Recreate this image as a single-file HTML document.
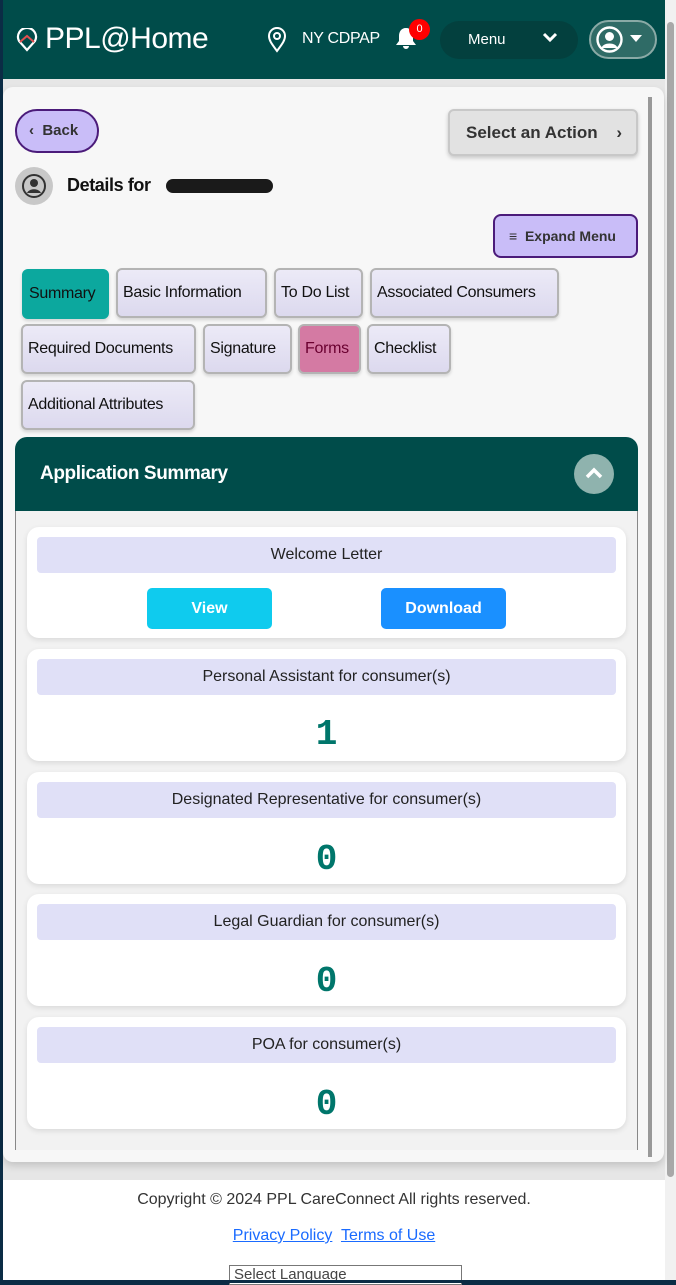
<!DOCTYPE html>
<html><head><meta charset="utf-8"><style>
*{box-sizing:border-box;margin:0;padding:0}
body{width:676px;height:1283px;overflow:hidden;background:#0b2c45;font-family:"Liberation Sans",sans-serif;position:relative}
.hdr{position:absolute;left:3px;top:0;width:662px;height:79px;background:#004c4a}
.sb{position:absolute;left:665px;top:0;width:11px;height:1283px;background:#f1f1f1}
.sb .th{position:absolute;left:2px;top:22px;width:7px;height:1155px;background:#a8a8a8;border-radius:4px}
.main{position:absolute;left:3px;top:79px;width:662px;height:1101px;background:#e6e6e6}
.card{position:absolute;left:3px;top:87px;width:661px;height:1075px;background:#f7f7f7;border-radius:10px;box-shadow:0 4px 8px rgba(0,0,0,.15)}
.foot{position:absolute;left:3px;top:1180px;width:662px;height:100px;background:#fff}
.tab{position:absolute;height:50px;border:2px solid #b4b4b4;border-radius:6px;background:linear-gradient(#eceaf7,#dcd9ee);font-size:16px;color:#111;line-height:46px;padding:0 5px;white-space:nowrap;overflow:hidden;letter-spacing:-0.3px;box-shadow:0 2px 3px rgba(0,0,0,.15)}
.box{position:absolute;left:27px;width:599px;background:#fff;border-radius:12px;box-shadow:0 2px 6px rgba(0,0,0,.1)}
.lbl{position:absolute;left:10px;right:10px;top:10px;height:36px;background:#e0e0f7;border-radius:4px;text-align:center;line-height:36px;font-size:16px;color:#222}
.num{position:absolute;left:0;right:0;text-align:center;font-family:"Liberation Mono",monospace;font-weight:bold;font-size:36px;color:#00766b}
</style></head><body>
<div class="hdr">
 <svg style="position:absolute;left:13px;top:28px" width="22" height="24" viewBox="0 0 22 24"><path d="M11 22 L3 13 A9 9 0 1 1 19 13 Z" fill="none" stroke="#fff" stroke-width="2.2"/><path d="M4 14 L11 8 L18 14" fill="none" stroke="#e05050" stroke-width="2"/></svg>
 <div style="position:absolute;left:42px;top:22px;color:#fff;font-size:30px;letter-spacing:-0.5px">PPL@Home</div>
 <svg style="position:absolute;left:263px;top:27px" width="22" height="26" viewBox="0 0 22 26"><path d="M11 24 C5 16 3 13 3 9 A8 8 0 0 1 19 9 C19 13 17 16 11 24Z" fill="none" stroke="#fff" stroke-width="2"/><circle cx="11" cy="9" r="3" fill="none" stroke="#fff" stroke-width="2"/></svg>
 <div style="position:absolute;left:299px;top:30px;color:#fff;font-size:16px;letter-spacing:-0.3px">NY CDPAP</div>
 <svg style="position:absolute;left:391px;top:26px" width="24" height="24" viewBox="0 0 24 24"><path d="M12 2 C7 2 5 6 5 10 L5 15 L2 19 L22 19 L19 15 L19 10 C19 6 17 2 12 2Z M9 20 A3 3 0 0 0 15 20Z" fill="#fff"/></svg>
 <div style="position:absolute;left:406px;top:19px;width:21px;height:21px;border-radius:50%;background:#f00;color:#fff;font-size:11px;text-align:center;line-height:21px">0</div>
 <div style="position:absolute;left:437px;top:21px;width:138px;height:38px;border-radius:19px;background:#03403e"></div>
 <div style="position:absolute;left:465px;top:31px;color:#fff;font-size:15px">Menu</div>
 <svg style="position:absolute;left:539px;top:32px" width="16" height="12"><path d="M2 2 L8 8 L14 2" fill="none" stroke="#fff" stroke-width="3"/></svg>
 <div style="position:absolute;left:586px;top:20px;width:68px;height:39px;border-radius:20px;background:#2f6b66;border:2px solid #8aaaa6"></div>
 <svg style="position:absolute;left:592px;top:25px" width="29" height="29" viewBox="0 0 29 29"><circle cx="14.5" cy="14.5" r="12" fill="none" stroke="#fff" stroke-width="2.4"/><circle cx="14.5" cy="11.5" r="4.5" fill="#fff"/><path d="M6.5 23 C8 17 21 17 22.5 23" fill="#fff"/></svg>
 <svg style="position:absolute;left:627px;top:35px" width="12" height="8"><path d="M0 0 L12 0 L6 7Z" fill="#fff"/></svg>
</div>
<div class="sb"><div class="th"></div></div>
<div class="main"></div>
<div class="card">
 <div style="position:absolute;left:12px;top:22px;width:84px;height:44px;border:2px solid #4b1b7a;border-radius:22px;background:#c9bdf8;font-size:15px;font-weight:bold;color:#333;line-height:40px;padding-left:12px">‹&nbsp; Back</div>
 <div style="position:absolute;left:445px;top:22px;width:190px;height:47px;border:2px solid #c8c8c8;border-radius:6px;background:#e2e2e2;font-size:17px;font-weight:bold;color:#333;line-height:43px;padding-left:16px;box-shadow:0 2px 4px rgba(0,0,0,.2)">Select an Action <span style="position:absolute;right:14px">›</span></div>
 <svg style="position:absolute;left:12px;top:80px" width="38" height="38" viewBox="0 0 38 38"><circle cx="19" cy="19" r="19" fill="#c8c8c8"/><circle cx="19" cy="19" r="11" fill="none" stroke="#333" stroke-width="2"/><circle cx="19" cy="16" r="4" fill="#333"/><path d="M12 26 C14 21 24 21 26 26Z" fill="#333"/></svg>
 <div style="position:absolute;left:64px;top:88px;font-size:18px;font-weight:bold;color:#111;letter-spacing:-0.4px">Details for</div>
 <div style="position:absolute;left:163px;top:92px;width:107px;height:14px;border-radius:7px;background:#1a1a1a"></div>
 <div style="position:absolute;left:490px;top:127px;width:145px;height:44px;border:2px solid #4b1b7a;border-radius:8px;background:#c9bdf8;font-size:14px;font-weight:bold;color:#333;line-height:40px;padding-left:14px">≡&nbsp; Expand Menu</div>
 <div class="tab" style="left:19px;top:182px;width:87px;background:#0ca89e;border-color:#0ca89e">Summary</div>
 <div class="tab" style="left:113px;top:181px;width:151px">Basic Information</div>
 <div class="tab" style="left:271px;top:181px;width:89px">To Do List</div>
 <div class="tab" style="left:367px;top:181px;width:189px">Associated Consumers</div>
 <div class="tab" style="left:18px;top:237px;width:175px">Required Documents</div>
 <div class="tab" style="left:200px;top:237px;width:89px">Signature</div>
 <div class="tab" style="left:295px;top:237px;width:63px;background:#d47aa3;color:#6a0030">Forms</div>
 <div class="tab" style="left:364px;top:237px;width:84px">Checklist</div>
 <div class="tab" style="left:18px;top:293px;width:174px">Additional Attributes</div>
 <div style="position:absolute;left:12px;top:350px;width:623px;height:74px;background:#004c4a;border-radius:12px 12px 0 0"></div>
 <div style="position:absolute;left:37px;top:376px;color:#fff;font-size:19px;font-weight:bold;letter-spacing:-0.4px">Application Summary</div>
 <div style="position:absolute;left:571px;top:367px;width:40px;height:40px;border-radius:50%;background:#8fb3ae"></div>
 <svg style="position:absolute;left:582px;top:380px" width="18" height="12"><path d="M2 10 L9 3 L16 10" fill="none" stroke="#fff" stroke-width="3.5"/></svg>
 <div style="position:absolute;left:12px;top:424px;width:623px;height:639px;border-left:1px solid #888;border-right:1px solid #888;background:#f2f2f2"></div>
 <div style="position:absolute;left:645px;top:10px;width:4px;height:1060px;background:#999"></div>
</div>
<div class="box" style="top:527px;height:111px"><div class="lbl">Welcome Letter</div>
 <div style="position:absolute;left:120px;top:61px;width:125px;height:41px;background:#0fcbee;border-radius:5px;color:#fff;font-size:16px;font-weight:bold;text-align:center;line-height:41px">View</div>
 <div style="position:absolute;left:354px;top:61px;width:125px;height:41px;background:#1a90ff;border-radius:5px;color:#fff;font-size:16px;font-weight:bold;text-align:center;line-height:41px">Download</div></div>
<div class="box" style="top:649px;height:112px"><div class="lbl">Personal Assistant for consumer(s)</div><div class="num" style="top:65px">1</div></div>
<div class="box" style="top:772px;height:112px"><div class="lbl">Designated Representative for consumer(s)</div><div class="num" style="top:67px">0</div></div>
<div class="box" style="top:894px;height:112px"><div class="lbl">Legal Guardian for consumer(s)</div><div class="num" style="top:67px">0</div></div>
<div class="box" style="top:1017px;height:112px"><div class="lbl">POA for consumer(s)</div><div class="num" style="top:67px">0</div></div>
<div class="foot">
 <div style="position:absolute;left:0;right:0;top:11px;text-align:center;font-size:16px;color:#333">Copyright © 2024 PPL CareConnect All rights reserved.</div>
 <div style="position:absolute;left:0;right:0;top:47px;text-align:center;font-size:16px;color:#1a6bff"><u>Privacy Policy</u>&nbsp; <u>Terms of Use</u></div>
 <div style="position:absolute;left:226px;top:85px;width:233px;height:20px;border:1px solid #777;background:#fff;font-size:15px;color:#444;padding-left:4px">Select Language</div>
</div>
<div style="position:absolute;left:0;top:1280px;width:676px;height:3px;background:#0b2c45"></div>
</body></html>
